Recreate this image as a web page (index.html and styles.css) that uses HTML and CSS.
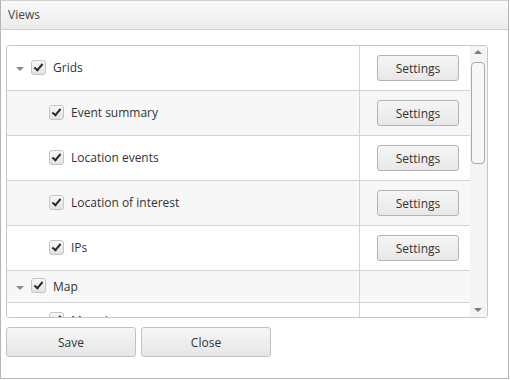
FILE: index.html
```html
<!DOCTYPE html>
<html lang="en">
<head>
    <meta charset="UTF-8">
    <title>Views</title>
    <link rel="stylesheet" href="styles.css">
</head>
<body>
    <div class="window">
        <div class="titlebar">Views</div>
        <div class="content">
            <div class="grid">
                <div class="rows">
                    <table class="views">
                        <tr>
                            <td class="name"><span class="toggle"></span><span class="check"></span>Grids</td>
                            <td class="action"><button class="btn-settings">Settings</button></td>
                        </tr>
                        <tr class="alt">
                            <td class="name child"><span class="check"></span>Event summary</td>
                            <td class="action"><button class="btn-settings">Settings</button></td>
                        </tr>
                        <tr>
                            <td class="name child"><span class="check"></span>Location events</td>
                            <td class="action"><button class="btn-settings">Settings</button></td>
                        </tr>
                        <tr class="alt">
                            <td class="name child"><span class="check"></span>Location of interest</td>
                            <td class="action"><button class="btn-settings">Settings</button></td>
                        </tr>
                        <tr>
                            <td class="name child"><span class="check"></span>IPs</td>
                            <td class="action"><button class="btn-settings">Settings</button></td>
                        </tr>
                        <tr class="alt short">
                            <td class="name"><span class="toggle"></span><span class="check"></span>Map</td>
                            <td class="action"></td>
                        </tr>
                        <tr class="mid">
                            <td class="name child"><span class="check"></span>Map view</td>
                            <td class="action"></td>
                        </tr>
                    </table>
                </div>
                <div class="scrollbar">
                    <span class="arrow up"></span>
                    <span class="thumb"></span>
                    <span class="arrow down"></span>
                </div>
            </div>
            <div class="actions">
                <button class="btn">Save</button>
                <button class="btn">Close</button>
            </div>
        </div>
    </div>
</body>
</html>
```

FILE: styles.css
```css
body {
    margin: 0;
    font-family: 'Open Sans', 'Noto Sans', sans-serif;
    font-size: 12px;
    color: #333;
    background: #fff;
}
.window {
    width: 507px;
    height: 377px;
    border: 1px solid #b5b5b5;
    border-top-color: #d0d0d0;
    background: #fff;
}
.titlebar {
    height: 28px;
    line-height: 28px;
    padding-left: 7px;
    background: linear-gradient(#fafafa, #ebebeb);
    border-bottom: 1px solid #cfcfcf;
    font-size: 12px;
    color: #444;
}
.content {
    padding: 15px 20px 0 5px;
}
.grid {
    display: flex;
    height: 271px;
    border: 1px solid #c8c8c8;
    border-radius: 3px;
    overflow: hidden;
}
.rows {
    flex: 1;
    overflow: hidden;
}
.views {
    width: 100%;
    border-collapse: collapse;
}
.views td {
    height: 44px;
    padding: 0;
    border-bottom: 1px solid #d4d4d4;
}
.views tr.short td {
    height: 31px;
}
.views tr.mid td {
    height: 35px;
}
.views tr.alt td {
    background: #f7f7f7;
}
.name {
    padding-left: 9px !important;
    white-space: nowrap;
}
.name.child {
    padding-left: 42px !important;
}
.action {
    width: 93px;
    border-left: 1px solid #d4d4d4;
    padding-left: 17px !important;
}
.toggle {
    display: inline-block;
    width: 0;
    height: 0;
    border-left: 4px solid transparent;
    border-right: 4px solid transparent;
    border-top: 4px solid #8a8a8a;
    margin-right: 7px;
    vertical-align: middle;
}
.check {
    display: inline-block;
    position: relative;
    width: 13px;
    height: 13px;
    border: 1px solid #c4c4c4;
    border-radius: 3px;
    background: linear-gradient(#f8f8f8, #e2e2e2);
    margin-right: 7px;
    vertical-align: middle;
    top: -2px;
}
.check::after {
    content: "";
    position: absolute;
    left: 4px;
    top: 1px;
    width: 3px;
    height: 7px;
    border: solid #2a2a2a;
    border-width: 0 2px 2px 0;
    transform: rotate(40deg);
}
.btn-settings {
    width: 82px;
    height: 26px;
    border: 1px solid #b3b3b3;
    border-radius: 3px;
    background: linear-gradient(#f5f5f5, #e8e8e8);
    font-family: inherit;
    font-size: 12px;
    color: #333;
    padding: 0;
}
.scrollbar {
    width: 17px;
    background: #f4f4f4;
    position: relative;
}
.arrow {
    position: absolute;
    left: 4px;
    width: 0;
    height: 0;
    border-left: 4px solid transparent;
    border-right: 4px solid transparent;
}
.arrow.up {
    top: 4px;
    border-bottom: 4px solid #7a7a7a;
}
.arrow.down {
    bottom: 5px;
    border-top: 4px solid #7a7a7a;
}
.thumb {
    position: absolute;
    left: 1px;
    top: 16px;
    width: 12px;
    height: 100px;
    border: 1px solid #a8a8a8;
    border-radius: 4px;
    background: #f7f7f7;
}
.actions {
    display: flex;
    gap: 5px;
    margin-top: 9px;
}
.btn {
    width: 130px;
    height: 30px;
    border: 1px solid #c2c2c2;
    border-radius: 3px;
    background: linear-gradient(#f6f6f6, #e6e6e6);
    font-family: inherit;
    font-size: 12px;
    color: #333;
}
```
